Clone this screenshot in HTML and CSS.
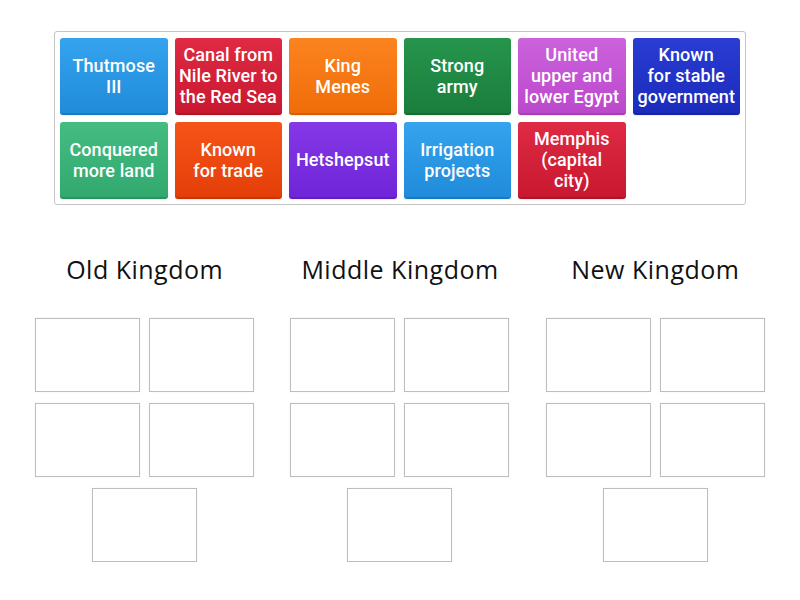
FILE: index.html
```html
<!DOCTYPE html>
<html>
<head>
<meta charset="utf-8">
<link rel="stylesheet" href="styles.css">
</head>
<body>
<div class="bank">
  <div class="tile c-blue">Thutmose<br>III</div>
  <div class="tile c-red">Canal from<br>Nile River to<br>the Red Sea</div>
  <div class="tile c-orange">King<br>Menes</div>
  <div class="tile c-green">Strong<br>army</div>
  <div class="tile c-orchid">United<br>upper and<br>lower Egypt</div>
  <div class="tile c-navy">Known<br>for stable<br>government</div>
  <div class="tile c-teal">Conquered<br>more land</div>
  <div class="tile c-redorange">Known<br>for trade</div>
  <div class="tile c-purple">Hetshepsut</div>
  <div class="tile c-blue">Irrigation<br>projects</div>
  <div class="tile c-red">Memphis<br>(capital<br>city)</div>
</div>
<div class="groups">
  <div class="group">
    <h2 class="title">Old Kingdom</h2>
    <div class="slots">
      <div class="slot"></div><div class="slot"></div>
      <div class="slot"></div><div class="slot"></div>
      <div class="slot last"></div>
    </div>
  </div>
  <div class="group">
    <h2 class="title">Middle Kingdom</h2>
    <div class="slots">
      <div class="slot"></div><div class="slot"></div>
      <div class="slot"></div><div class="slot"></div>
      <div class="slot last"></div>
    </div>
  </div>
  <div class="group">
    <h2 class="title">New Kingdom</h2>
    <div class="slots">
      <div class="slot"></div><div class="slot"></div>
      <div class="slot"></div><div class="slot"></div>
      <div class="slot last"></div>
    </div>
  </div>
</div>
</body>
</html>
```
FILE: styles.css
```css
body {
  margin: 0;
  background: #fff;
  font-family: "Open Sans", "Lato", sans-serif;
}
.bank {
  margin: 31px 54px 0;
  border: 1px solid #c4c4c4;
  border-radius: 3px;
  padding: 6px 5px 5px;
  display: grid;
  grid-template-columns: repeat(6, 1fr);
  gap: 7px;
}
.tile {
  height: 77px;
  box-sizing: border-box;
  border-radius: 3px;
  color: #fff;
  font-family: "Roboto", "Open Sans", sans-serif;
  font-weight: 500;
  font-size: 18px;
  line-height: 21px;
  letter-spacing: 0.1px;
  display: flex;
  align-items: center;
  justify-content: center;
  text-align: center;
  padding: 0 2px 2px;
  white-space: nowrap;
  box-shadow: inset 0 -2px 0 rgba(0,0,0,0.12), 0 1px 1px rgba(0,0,0,0.08);
}
.c-blue { background: linear-gradient(#35a3ee, #1f8bda); }
.c-red { background: linear-gradient(#df2a44, #c81830); }
.c-orange { background: linear-gradient(#fb8420, #f06c08); }
.c-green { background: linear-gradient(#26954c, #1a7d3c); }
.c-orchid { background: linear-gradient(#cc62dc, #bb48cc); }
.c-navy { background: linear-gradient(#2a3cd2, #1a2bbc); }
.c-teal { background: linear-gradient(#44bd82, #32a86e); }
.c-redorange { background: linear-gradient(#f55418, #e43e08); }
.c-purple { background: linear-gradient(#8438e6, #6e24d8); }

.groups {
  display: grid;
  grid-template-columns: repeat(3, 1fr);
  padding: 0 17px;
  margin-top: 49px;
}
.group {
  display: flex;
  flex-direction: column;
  align-items: center;
}
.title {
  margin: 0;
  font-weight: 400;
  font-size: 25px;
  line-height: 30px;
  letter-spacing: 0.5px;
  color: #111;
}
.slots {
  margin-top: 34px;
  display: grid;
  grid-template-columns: 105px 105px;
  column-gap: 9px;
  row-gap: 11px;
}
.slot {
  width: 105px;
  height: 74px;
  box-sizing: border-box;
  border: 1px solid #bdbdbd;
  box-shadow: 0 0 2px rgba(0,0,0,0.06);
}
.slot.last {
  grid-column: 1 / span 2;
  justify-self: center;
}
```
